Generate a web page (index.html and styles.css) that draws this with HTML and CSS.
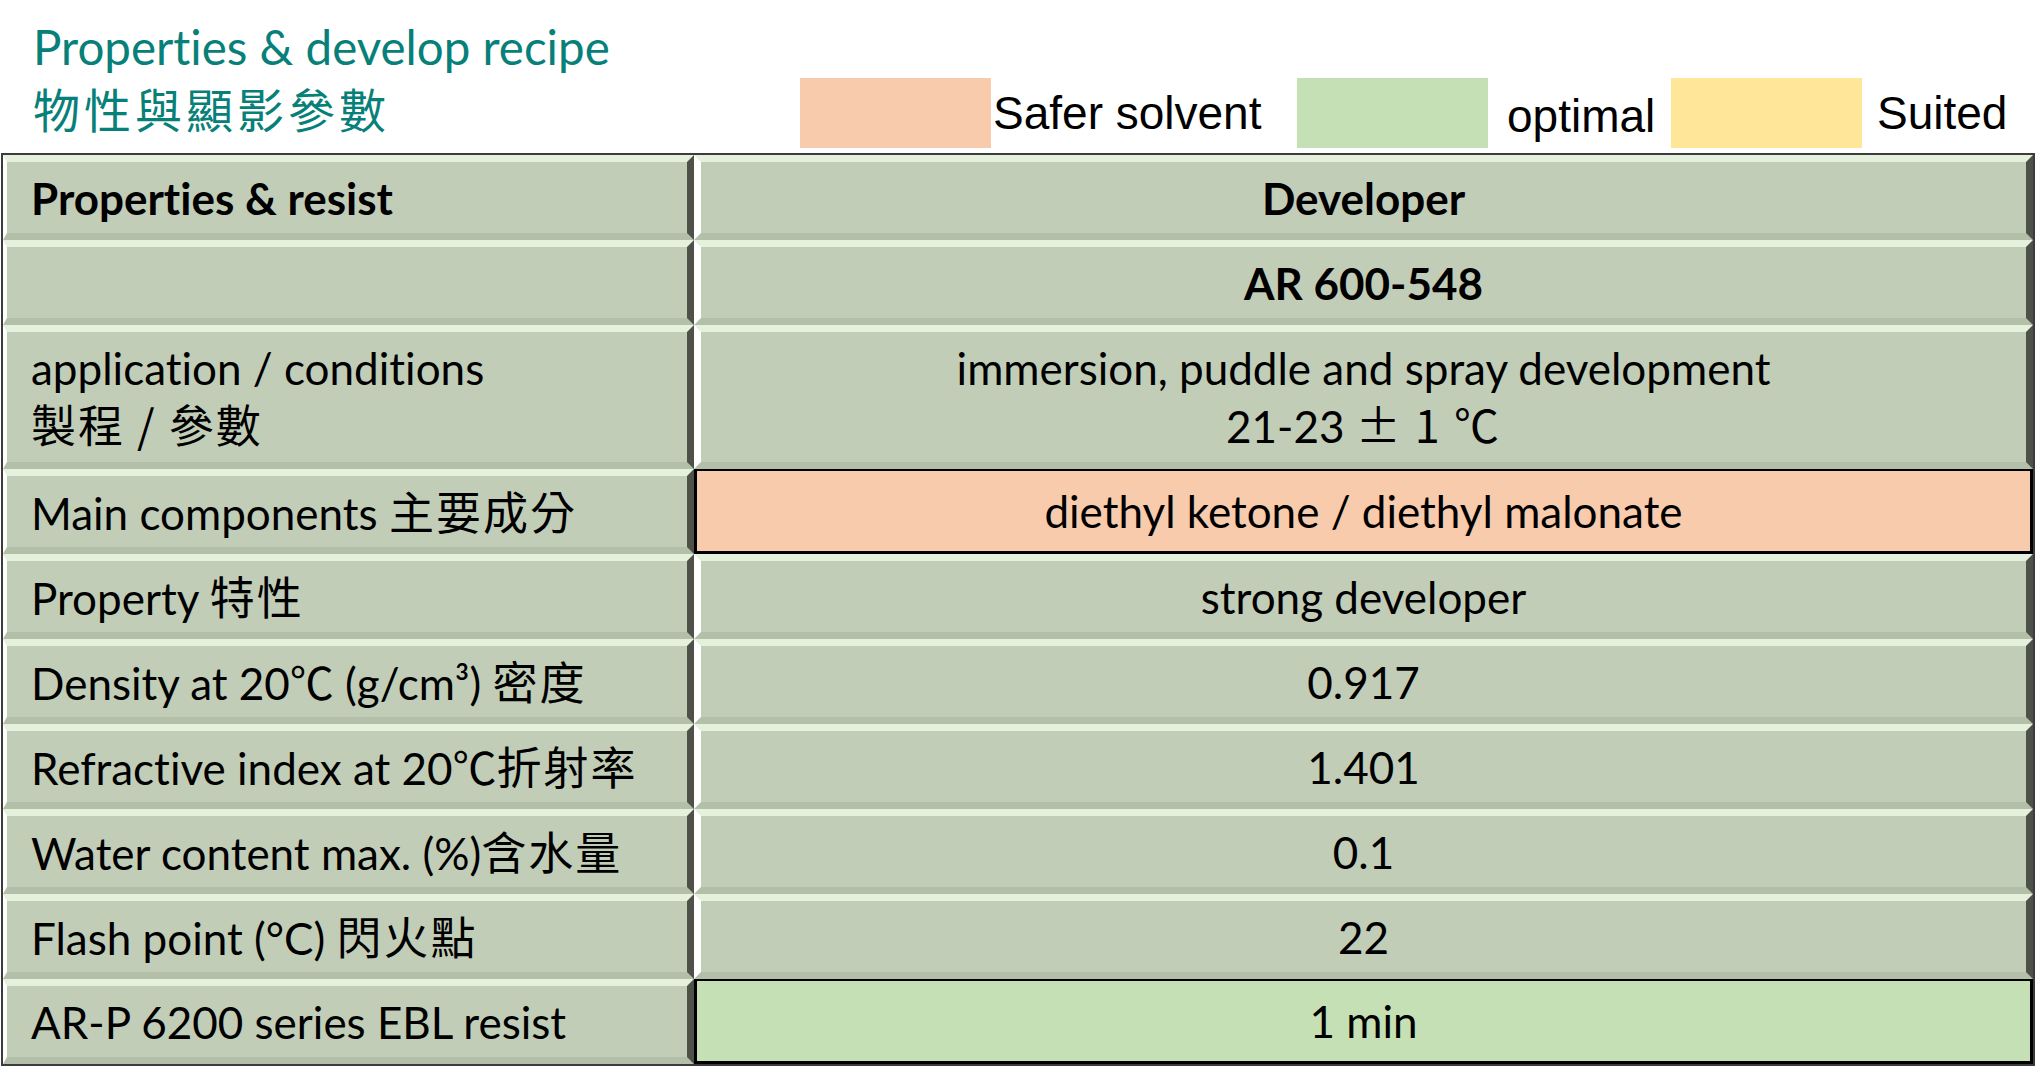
FILE: index.html
```html
<!DOCTYPE html>
<html lang="zh-Hant">
<head>
<meta charset="utf-8">
<title>Properties &amp; develop recipe</title>
<link rel="stylesheet" href="styles.css">
</head>
<body>
<header class="top">
  <div class="title">
    <div class="title-en">Properties &amp; develop recipe</div>
    <div class="title-zh">物性與顯影參數</div>
  </div>
  <div class="legend">
    <div class="legend-item item-safer"><span class="swatch peach"></span><span class="legend-label">Safer solvent</span></div>
    <div class="legend-item item-optimal"><span class="swatch green"></span><span class="legend-label low">optimal</span></div>
    <div class="legend-item item-suited"><span class="swatch yellow"></span><span class="legend-label">Suited</span></div>
  </div>
</header>
<div class="table">
  <div class="cell left head"><div class="txt">Properties &amp; resist</div></div>
  <div class="cell right head"><div class="txt">Developer</div></div>

  <div class="cell left"></div>
  <div class="cell right head"><div class="txt">AR 600-548</div></div>

  <div class="cell left"><div class="txt">application / conditions<br><span class="zh">製程 / 參數</span></div></div>
  <div class="cell right"><div class="txt">immersion, puddle and spray development<br>21-23 <span class="zh">± 1 ℃</span></div></div>

  <div class="cell left"><div class="txt">Main components <span class="zh">主要成分</span></div></div>
  <div class="cell right mark peach"><div class="txt">diethyl ketone / diethyl malonate</div></div>

  <div class="cell left"><div class="txt">Property <span class="zh">特性</span></div></div>
  <div class="cell right"><div class="txt">strong developer</div></div>

  <div class="cell left"><div class="txt">Density at 20℃ (g/cm³) <span class="zh">密度</span></div></div>
  <div class="cell right"><div class="txt">0.917</div></div>

  <div class="cell left"><div class="txt">Refractive index at 20℃<span class="zh">折射率</span></div></div>
  <div class="cell right"><div class="txt">1.401</div></div>

  <div class="cell left"><div class="txt">Water content max. (%)<span class="zh">含水量</span></div></div>
  <div class="cell right"><div class="txt">0.1</div></div>

  <div class="cell left"><div class="txt">Flash point (°C) <span class="zh">閃火點</span></div></div>
  <div class="cell right"><div class="txt">22</div></div>

  <div class="cell left"><div class="txt">AR-P 6200 series EBL resist</div></div>
  <div class="cell right mark green"><div class="txt">1 min</div></div>
</div>
</body>
</html>
```

FILE: styles.css
```css
html, body {
  margin: 0;
  padding: 0;
  background: #ffffff;
}

body {
  width: 2044px;
  height: 1081px;
  overflow: hidden;
  font-family: Lato, "Noto Sans CJK TC", sans-serif;
  font-variant-ligatures: none;
  color: #000;
}

.top {
  display: flex;
  height: 153px;
}

.title {
  width: 800px;
  box-sizing: border-box;
  padding-left: 33px;
  padding-top: 21px;
  color: #078079;
}

.title-en {
  font-family: Lato, sans-serif;
  font-size: 47.5px;
  line-height: 52px;
  white-space: nowrap;
}

.title-zh {
  margin-top: 7px;
  font-family: "Noto Sans CJK TC", sans-serif;
  font-size: 47px;
  line-height: 56px;
  letter-spacing: 4px;
  white-space: nowrap;
}

.legend {
  display: flex;
  padding-top: 78px;
}

.legend-item {
  display: flex;
  height: 70px;
}

.item-safer { width: 497px; }
.item-optimal { width: 374px; }
.item-suited { width: 373px; }

.swatch {
  display: block;
  width: 191px;
  height: 70px;
  flex: none;
}

.legend-label {
  font-family: "Liberation Sans", Arial, sans-serif;
  font-size: 46px;
  line-height: 70px;
  white-space: nowrap;
  padding-left: 2px;
}

.item-optimal .legend-label { padding-left: 19px; }
.item-suited .legend-label { padding-left: 15px; }
.legend-label.low { padding-top: 3px; }

.peach { background: #f8cbad; }
.green { background: #c5e0b4; }
.yellow { background: #ffe699; }

.table {
  margin-left: 1px;
  width: 2034px;
  box-sizing: border-box;
  border: 2px solid #3c3c3c;
  display: grid;
  grid-template-columns: 691px 1339px;
  grid-template-rows: 85px 85px 144px repeat(7, 85px);
  background: #c2cdb8;
}

.cell {
  box-sizing: border-box;
  display: flex;
  align-items: center;
  background: #c2cdb8;
  border-style: solid;
  border-width: 7px;
  border-top-color: #e5f0dd;
  border-left-color: #ffffff;
  border-bottom-color: #b4bfaa;
  border-right-color: #4d5147;
  font-size: 44px;
  line-height: 56px;
  white-space: nowrap;
}

.cell.left {
  padding-left: 24px;
  border-left-width: 4px;
}

.cell.right {
  justify-content: center;
  text-align: center;
}

.cell.head {
  font-weight: 700;
}

.txt {
  display: block;
}

.zh {
  font-family: "Noto Sans CJK TC", sans-serif;
  font-size: 45px;
  letter-spacing: 2px;
}

.cell.mark {
  border-style: solid;
  border-color: #000;
  border-width: 2px 3px 3px 3px;
}

.cell.mark.peach { background: #f8cbad; }
.cell.mark.green { background: #c5e0b4; }
```
